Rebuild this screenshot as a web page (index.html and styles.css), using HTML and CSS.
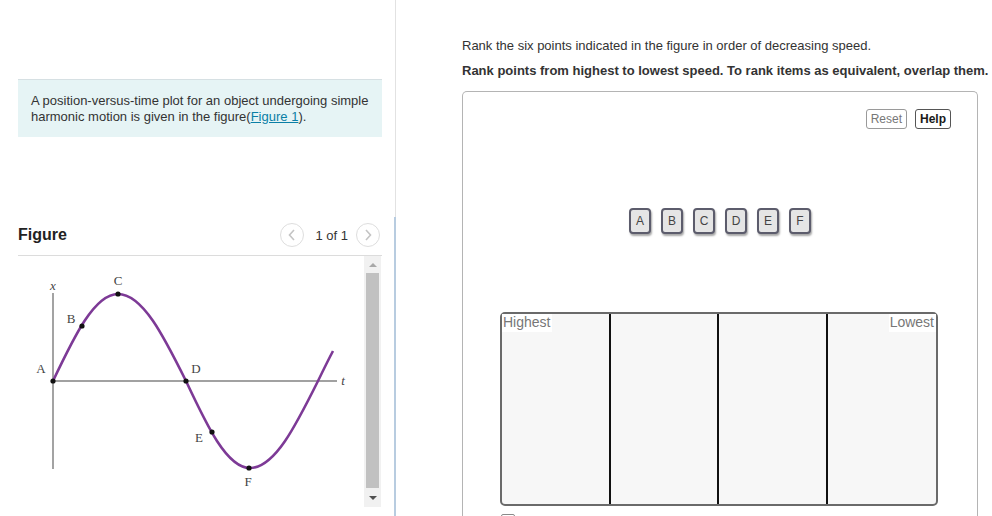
FILE: index.html
```html
<!DOCTYPE html>
<html>
<head>
<meta charset="utf-8">
<link rel="stylesheet" href="styles.css">
</head>
<body>
<div class="page">
  <div class="left">
    <div class="intro">A position-versus-time plot for an object undergoing simple harmonic motion is given in the figure(<a href="#">Figure 1</a>).</div>
    <div class="fig-head">
      <h2 class="fig-title">Figure</h2>
      <div class="pager">
        <span class="circ"><svg width="24" height="24" viewBox="0 0 24 24"><path d="M14 7 L9.5 12 L14 17" fill="none" stroke="#c4c4c4" stroke-width="1.6"/></svg></span>
        <span class="count">1 of 1</span>
        <span class="circ"><svg width="24" height="24" viewBox="0 0 24 24"><path d="M10 7 L14.5 12 L10 17" fill="none" stroke="#c4c4c4" stroke-width="1.6"/></svg></span>
      </div>
    </div>
    <div class="fig-body">
      <svg class="plot" width="346" height="251" viewBox="18 257 346 251">
        <line x1="53" y1="294" x2="53" y2="470" stroke="#8c8c8c" stroke-width="1.6"/>
        <line x1="53" y1="382" x2="337" y2="382" stroke="#444" stroke-width="1.2"/>
        <path d="M53 382 C74.2 337.4 94.5 295 118 295 C142.6 295 163.8 337.4 186 382 C206.9 426.6 226.8 469 250 469 C274.6 469 295.8 426.6 318 382 C323 371.7 328 361.4 333 352" fill="none" stroke="#7d3a96" stroke-width="2.6"/>
        <g fill="#111">
          <circle cx="53" cy="382" r="2.6"/>
          <circle cx="82" cy="327" r="2.6"/>
          <circle cx="118" cy="295" r="2.6"/>
          <circle cx="186" cy="382" r="2.6"/>
          <circle cx="212" cy="433" r="2.6"/>
          <circle cx="249" cy="469" r="2.6"/>
        </g>
        <g class="lbl-g" fill="#444" text-anchor="middle">
          <text x="53" y="291" font-style="italic">x</text>
          <text x="118" y="286">C</text>
          <text x="71" y="324">B</text>
          <text x="41" y="374">A</text>
          <text x="196" y="374">D</text>
          <text x="343" y="386" font-style="italic">t</text>
          <text x="199" y="443">E</text>
          <text x="248" y="487">F</text>
        </g>
      </svg>
      <div class="vscroll">
        <div class="arr-box"><span class="arr-up"></span></div>
        <div class="thumb"></div>
        <div class="arr-box arr-box-down"><span class="arr-down"></span></div>
      </div>
    </div>
  </div>
  <div class="splitter">
    <div class="split-top"></div>
    <div class="split-bot"></div>
  </div>
  <div class="right">
    <div class="topline"></div>
    <div class="content">
      <p class="q">Rank the six points indicated in the figure in order of decreasing speed.</p>
      <p class="instr">Rank points from highest to lowest speed. To rank items as equivalent, overlap them.</p>
      <div class="panel">
        <div class="tools">
          <span class="btn reset">Reset</span>
          <span class="btn help">Help</span>
        </div>
        <div class="tiles">
          <span class="tile">A</span>
          <span class="tile">B</span>
          <span class="tile">C</span>
          <span class="tile">D</span>
          <span class="tile">E</span>
          <span class="tile">F</span>
        </div>
        <div class="rank">
          <div class="bin"><span class="rlbl">Highest</span></div>
          <div class="bin"></div>
          <div class="bin"></div>
          <div class="bin bin-last"><span class="rlbl">Lowest</span></div>
        </div>
        <div class="check"></div>
      </div>
    </div>
  </div>
</div>
</body>
</html>
```

FILE: styles.css
```css
html, body {
  margin: 0;
  padding: 0;
  background: #fff;
}
body {
  width: 992px;
  height: 516px;
  overflow: hidden;
  font-family: "Liberation Sans", Arial, sans-serif;
  font-size: 13px;
  color: #333;
}
.page {
  display: flex;
  height: 516px;
}
.left {
  width: 394px;
  box-sizing: border-box;
  padding: 0 12px 0 18px;
  display: flex;
  flex-direction: column;
}
.intro {
  margin-top: 79px;
  background: #e6f4f5;
  border-top: 1px solid #d6e0e3;
  padding: 13px 6px 12px 13px;
  line-height: 16px;
  font-size: 13px;
  color: #333;
}
.intro a {
  color: #0a7fa6;
  text-decoration: underline;
}
.fig-head {
  margin-top: 86px;
  display: flex;
  align-items: center;
  justify-content: space-between;
  height: 24px;
  padding-bottom: 8px;
  border-bottom: 1px solid #dcdcdc;
}
.fig-title {
  margin: 0;
  font-size: 16px;
  font-weight: bold;
  color: #222;
}
.pager {
  display: flex;
  align-items: center;
  margin-right: 2px;
}
.circ {
  width: 24px;
  height: 24px;
  box-sizing: border-box;
  border: 1px solid #dedede;
  border-radius: 50%;
  display: flex;
  align-items: center;
  justify-content: center;
}
.circ svg {
  display: block;
  flex: none;
}
.count {
  font-size: 13px;
  color: #333;
  margin: 0 8px 0 11px;
}
.fig-body {
  display: flex;
  height: 259px;
}
.plot {
  display: block;
  flex: none;
}
.lbl-g {
  font-family: "Liberation Serif", "Times New Roman", serif;
  font-size: 13px;
}
.vscroll {
  width: 17px;
  height: 251px;
  background: #f1f1f1;
  display: flex;
  flex-direction: column;
  align-items: center;
}
.arr-box {
  height: 17px;
  width: 17px;
  display: flex;
  align-items: center;
  justify-content: center;
}
.arr-box-down {
  height: 19px;
}
.arr-up {
  width: 0;
  height: 0;
  border-left: 4px solid transparent;
  border-right: 4px solid transparent;
  border-bottom: 4px solid #a8a8a8;
}
.arr-down {
  width: 0;
  height: 0;
  border-left: 4px solid transparent;
  border-right: 4px solid transparent;
  border-top: 4px solid #505050;
}
.thumb {
  width: 13px;
  height: 215px;
  background: #c1c1c1;
}
.splitter {
  width: 2px;
  display: flex;
  flex-direction: column;
}
.split-top {
  height: 217px;
  width: 1px;
  margin-left: 1px;
  background: #e2e2e2;
}
.split-bot {
  flex: 1;
  background: #b8cce0;
}
.right {
  flex: 1;
  display: flex;
  flex-direction: column;
}
.topline {
  margin: 24px 0 0 24px;
  height: 3px;
  background: #f4f4f4;
}
.content {
  padding-left: 66px;
}
.q {
  margin: 14px 0 0;
  line-height: 16px;
  font-size: 13px;
  color: #333;
}
.instr {
  margin: 9px 0 0;
  line-height: 16px;
  font-size: 13px;
  font-weight: bold;
  color: #333;
  white-space: nowrap;
}
.panel {
  margin-top: 12px;
  width: 516px;
  box-sizing: border-box;
  border: 1px solid #b4b4b4;
  border-bottom: none;
  border-radius: 5px 5px 0 0;
  padding-bottom: 40px;
}
.tools {
  display: flex;
  justify-content: flex-end;
  gap: 8px;
  padding: 17px 26px 0 0;
}
.btn {
  height: 20px;
  box-sizing: border-box;
  border: 1px solid #8a8a8a;
  border-radius: 3px;
  padding: 0 4px;
  line-height: 18px;
  font-size: 12px;
}
.reset {
  color: #777;
  border-color: #9a9a9a;
}
.help {
  color: #1a1a1a;
  font-weight: bold;
  border-color: #555;
}
.tiles {
  margin-top: 79px;
  display: flex;
  justify-content: center;
  gap: 10px;
}
.tile {
  width: 22px;
  height: 26px;
  box-sizing: border-box;
  border: 2px solid #5c5c6c;
  border-radius: 4px;
  background: #e5e5e5;
  box-shadow: 1px 2px 2px rgba(0, 0, 0, 0.35);
  text-align: center;
  line-height: 22px;
  font-size: 12px;
  color: #444;
}
.rank {
  margin: 78px 0 0 37px;
  width: 438px;
  height: 194px;
  box-sizing: border-box;
  border: 2px solid #6a6a6a;
  border-radius: 5px;
  background: #f7f7f7;
  display: grid;
  grid-template-columns: repeat(4, 1fr);
}
.bin {
  border-right: 2px solid #111;
  display: flex;
  align-items: flex-start;
}
.bin-last {
  border-right: none;
  justify-content: flex-end;
}
.rlbl {
  background: #fff;
  color: #777;
  font-size: 14px;
  line-height: 17px;
  padding: 0 2px 1px 1px;
}
.check {
  margin: 8px 0 0 38px;
  width: 12px;
  height: 12px;
  border: 1px solid #8a8a8a;
  border-radius: 2px;
}
```
